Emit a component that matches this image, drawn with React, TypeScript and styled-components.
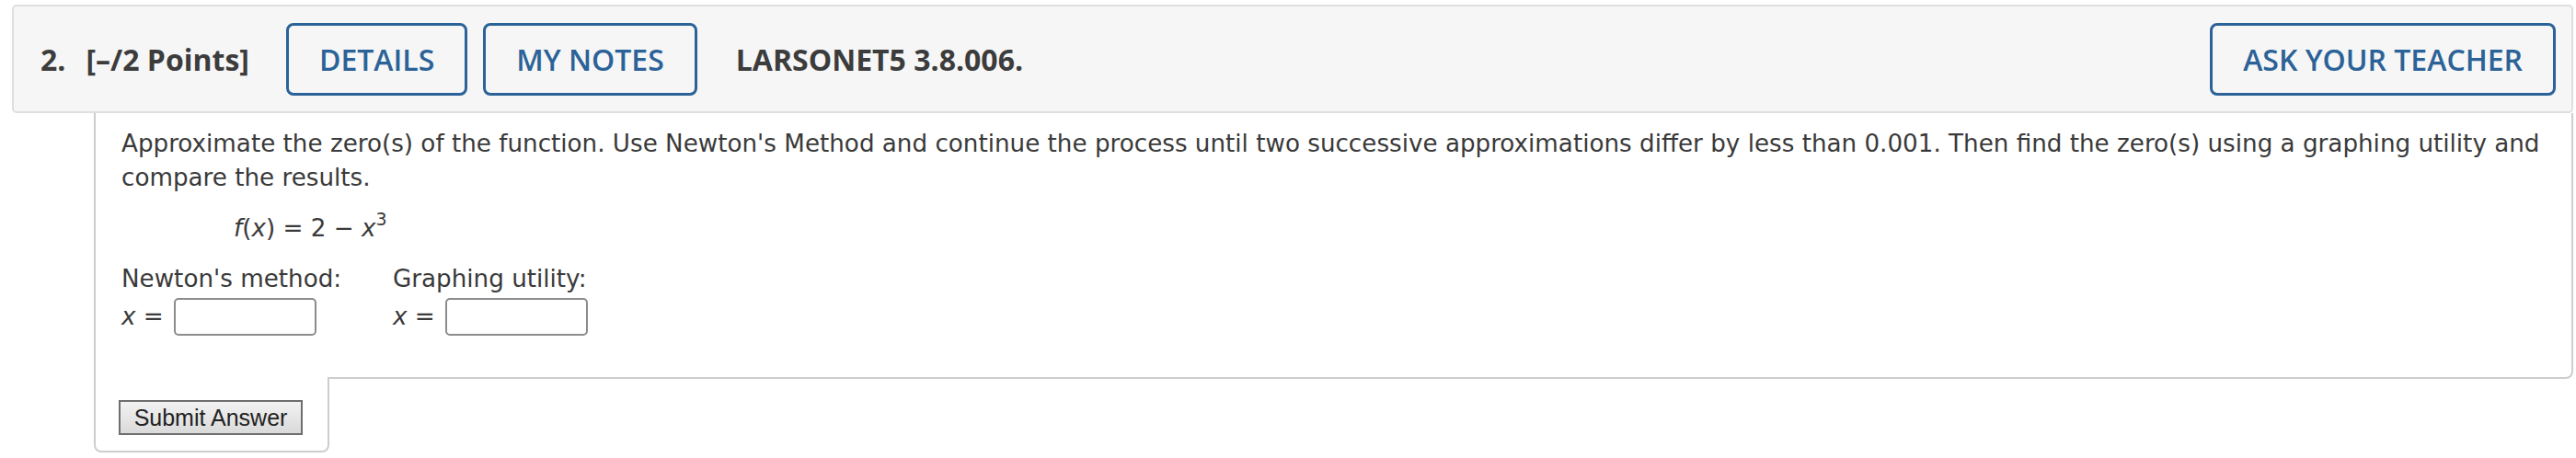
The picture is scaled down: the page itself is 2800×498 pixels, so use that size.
import React from 'react'
import styled, { createGlobalStyle } from 'styled-components'

const GlobalStyle = createGlobalStyle`
    html, body {
        margin: 0;
        padding: 0;
        background: #fff;
    }
`

const App: React.FC = () => {
    return (
        <Page>
            <GlobalStyle />
            <Header>
                <QuestionNo>2.</QuestionNo>
                <Points>[–/2 Points]</Points>
                <HeaderButton>DETAILS</HeaderButton>
                <HeaderButton>MY NOTES</HeaderButton>
                <Reference>LARSONET5 3.8.006.</Reference>
                <Spacer />
                <HeaderButton>ASK YOUR TEACHER</HeaderButton>
            </Header>
            <Body>
                <Panel>
                    <Prompt>
                        Approximate the zero(s) of the function. Use Newton's Method and continue the process until two
                        successive approximations differ by less than 0.001. Then find the zero(s) using a graphing
                        utility and compare the results.
                    </Prompt>
                    <Equation>
                        <i>f</i>(<i>x</i>) = 2 − <i>x</i><Sup>3</Sup>
                    </Equation>
                    <AnswerGrid>
                        <Label>Newton's method:</Label>
                        <Label>Graphing utility:</Label>
                        <AnswerCell>
                            <i>x</i> = <AnswerInput type="text" />
                        </AnswerCell>
                        <AnswerCell>
                            <i>x</i> = <AnswerInput type="text" />
                        </AnswerCell>
                    </AnswerGrid>
                </Panel>
                <SubmitBox>
                    <SubmitButton type="button">Submit Answer</SubmitButton>
                </SubmitBox>
            </Body>
        </Page>
    )
}

export default App

const Page = styled.div`
    padding: 5px 3px 0 13px;
`

const Header = styled.div`
    display: flex;
    align-items: center;
    height: 118px;
    box-sizing: border-box;
    padding: 0 17px 0 29px;
    background-color: #f6f6f6;
    border: 2px solid #dedede;
    border-radius: 5px;
    font-family: "Open Sans", "Liberation Sans", sans-serif;
    color: #3c3c3c;
`

const QuestionNo = styled.span`
    font-size: 32px;
    font-weight: 700;
    margin-right: 22px;
`

const Points = styled(QuestionNo)`
    margin-right: 40px;
`

const HeaderButton = styled.button`
    height: 79px;
    box-sizing: border-box;
    padding: 0 33px;
    margin-right: 17px;
    background: transparent;
    border: 3.5px solid #2b6298;
    border-radius: 8px;
    font-family: "Open Sans", "Liberation Sans", sans-serif;
    font-size: 32px;
    font-weight: 600;
    color: #2b6298;
    &:last-child {
        margin-right: 0;
    }
`

const Reference = styled.span`
    margin-left: 25px;
    font-size: 32px;
    font-weight: 700;
`

const Spacer = styled.div`
    flex-grow: 1;
`

const Body = styled.div`
    margin-left: 89px;
    font-family: "DejaVu Sans", Verdana, sans-serif;
    font-size: 26.2px;
    line-height: 37px;
    color: #3a3a3a;
`

const Panel = styled.div`
    padding: 15px 20px 45px 28px;
    border: 2px solid #cdcdcd;
    border-top: none;
    border-bottom-right-radius: 8px;
    background: #fff;
`

const Prompt = styled.p`
    margin: 0;
`

const Equation = styled.div`
    margin: 18px 0 0 122px;
`

const Sup = styled.sup`
    font-size: 19px;
    line-height: 0;
    vertical-align: 12px;
`

const AnswerGrid = styled.div`
    display: grid;
    grid-template-columns: 295px auto;
    justify-content: start;
    row-gap: 2px;
    margin-top: 18px;
`

const Label = styled.div``

const AnswerCell = styled.div`
    display: flex;
    align-items: center;
    height: 41px;
    white-space: pre;
`

const AnswerInput = styled.input`
    width: 155px;
    height: 41px;
    margin-left: 3px;
    box-sizing: border-box;
    border: 2px solid #8c8c8c;
    border-radius: 5px;
    background: #fff;
`

const SubmitBox = styled.div`
    width: fit-content;
    margin-top: -2px;
    padding: 25px 27px 17px 25px;
    border: 2px solid #cdcdcd;
    border-top: none;
    border-radius: 0 0 8px 8px;
    background: #fff;
`

const SubmitButton = styled.button`
    display: block;
    width: 200px;
    height: 38px;
    box-sizing: border-box;
    padding: 0;
    border: 2px solid #6e6e6e;
    border-radius: 0;
    background: linear-gradient(#f2f2f2, #dadada);
    font-family: "Liberation Sans", Arial, sans-serif;
    font-size: 25px;
    color: #222;
`
